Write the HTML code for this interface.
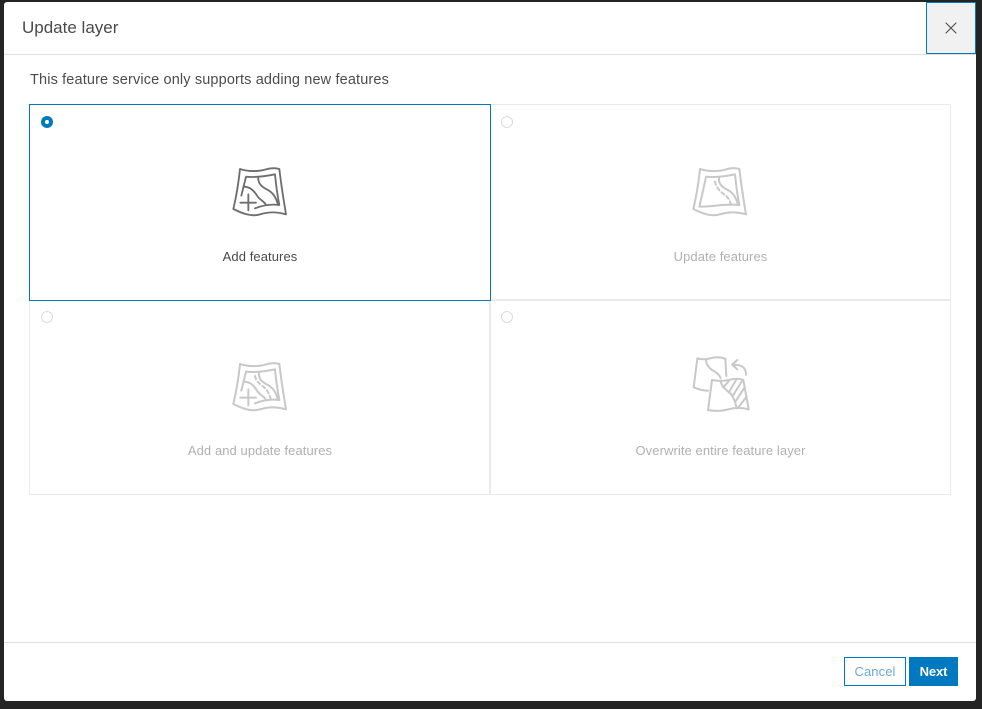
<!DOCTYPE html>
<html><head><meta charset="utf-8"><style>
html,body{margin:0;padding:0;width:982px;height:709px;overflow:hidden;background:#242424;font-family:"Liberation Sans",sans-serif}
div,svg,span{position:absolute;box-sizing:border-box}
.t{white-space:nowrap}
.card{border:1px solid #eaeaea;background:#fff}
.lbl{font-size:13px;text-align:center;white-space:nowrap;color:#b0b0b0;letter-spacing:.08px;line-height:16px}
.r{width:12px;height:12px;border:1px solid #dcdcdc;border-radius:50%;background:#fff}
svg{fill:none;stroke-linecap:round;stroke-linejoin:round}
</style></head><body>
<div style="left:4px;top:2px;width:972px;height:699px;background:#fff;border-radius:3px"></div>
<div class="t" style="left:22px;top:18px;font-size:17px;line-height:20px;color:#4a4a4a">Update layer</div>
<div style="left:4px;top:54px;width:972px;height:1px;background:#dfdfdf"></div>
<div style="left:926px;top:2px;width:50px;height:52px;background:#f1f1f1;border:1px solid #0079c1"></div>
<svg style="left:945px;top:22px" width="12" height="12" viewBox="0 0 12 12" stroke="#4c4c4c" stroke-width="1.1"><path d="M1 1L11 11M11 1L1 11"/></svg>
<div class="t" style="left:30px;top:71px;font-size:14.5px;line-height:18px;color:#4c4c4c;letter-spacing:.14px">This feature service only supports adding new features</div>

<div class="card" style="left:490px;top:104px;width:461px;height:196px"></div>
<div class="card" style="left:29px;top:300px;width:461px;height:195px"></div>
<div class="card" style="left:490px;top:300px;width:461px;height:195px"></div>
<div class="card" style="left:29px;top:104px;width:462px;height:197px;border-color:#0079c1"></div>

<div style="left:41px;top:116px;width:12px;height:12px;border-radius:50%;background:#0079c1"></div>
<div style="left:45px;top:120px;width:4px;height:4px;border-radius:50%;background:#fff"></div>
<div class="r" style="left:501px;top:116px"></div>
<div class="r" style="left:41px;top:311px"></div>
<div class="r" style="left:501px;top:311px"></div>

<svg style="left:220px;top:155px" width="80" height="70" viewBox="0 0 240 210" stroke="#6e6e6e" stroke-width="5.5">
<path d="M60 42C85 50 115 50 135 44C150 39 165 38 178 42C183 85 190 130 198 178C170 170 145 170 120 178C95 186 68 176 40 162C50 120 56 80 60 42Z"/>
<path d="M78 65C105 68 135 64 165 58C168 90 172 120 178 150C155 147 130 150 105 160M78 65L64 122"/>
<path d="M115 66C113 85 125 95 140 103C158 112 168 125 174 150"/>
<path d="M70 95C90 95 100 105 110 120C118 135 135 140 138 150"/>
<path d="M61 143H108M85 118V166"/>
</svg>
<svg style="left:680px;top:155px" width="80" height="70" viewBox="0 0 240 210" stroke="#c8c8c8" stroke-width="6">
<path d="M60 42C85 50 115 50 135 44C150 39 165 38 178 42C183 85 190 130 198 178C170 170 145 170 120 178C95 186 68 176 40 162C50 120 56 80 60 42Z"/>
<path d="M78 65C105 68 135 64 165 58C168 90 172 120 178 150C140 145 100 155 58 155C65 125 72 95 78 65Z"/>
<path d="M118 65C113 85 125 95 140 103C158 112 168 125 174 150"/>
<path d="M105 80C108 95 118 108 130 116C142 124 150 135 153 150" stroke-dasharray="10 9"/>
</svg>
<svg style="left:220px;top:350px" width="80" height="70" viewBox="0 0 240 210" stroke="#c8c8c8" stroke-width="6">
<path d="M60 42C85 50 115 50 135 44C150 39 165 38 178 42C183 85 190 130 198 178C170 170 145 170 120 178C95 186 68 176 40 162C50 120 56 80 60 42Z"/>
<path d="M78 65C105 68 135 64 165 58C168 90 172 120 178 150C155 147 130 150 105 160M78 65L64 122"/>
<path d="M118 66C113 85 125 95 140 103C158 112 168 125 174 150"/>
<path d="M105 78C108 92 118 102 130 110C142 120 148 130 152 148" stroke-dasharray="10 9"/>
<path d="M70 95C90 95 100 105 110 120C118 135 135 140 138 150"/>
<path d="M61 143H108M85 118V166"/>
</svg>
<svg style="left:680px;top:350px" width="80" height="70" viewBox="0 0 240 210" stroke="#c8c8c8" stroke-width="6">
<path d="M52 25C65 30 80 28 95 24C110 20 125 22 136 26L139 78M52 25L41 112C55 118 70 122 84 122"/>
<path d="M78 28C78 45 88 55 100 62C110 68 118 75 122 84"/>
<path d="M96 90C115 94 130 94 150 89C165 85 178 85 190 90L206 178C185 172 165 172 145 178C125 184 105 184 84 180Z"/>
<path d="M122 92C125 115 145 122 155 135C163 146 167 160 170 175"/>
<path d="M130 112L147 92M148 125L170 87M160 135L186 93M168 152L194 112M175 172L200 140"/>
<path d="M198 74C198 52 185 44 158 44M172 30L156 44L172 58"/>
</svg>

<div class="lbl" style="left:29px;top:249px;width:462px;color:#4a4a4a">Add features</div>
<div class="lbl" style="left:490px;top:249px;width:461px">Update features</div>
<div class="lbl" style="left:29px;top:443px;width:462px">Add and update features</div>
<div class="lbl" style="left:490px;top:443px;width:461px">Overwrite entire feature layer</div>

<div style="left:4px;top:642px;width:972px;height:1px;background:#dfdfdf"></div>
<div style="left:844px;top:657px;width:62px;height:29px;border:1px solid #0079c1;background:#fff;color:#6aa9d6;font-size:13px;line-height:27px;text-align:center;letter-spacing:.1px">Cancel</div>
<div style="left:909px;top:657px;width:49px;height:29px;background:#0079c1;color:#fff;font-size:13px;line-height:29px;text-align:center;font-weight:700;letter-spacing:-.1px">Next</div>
</body></html>
